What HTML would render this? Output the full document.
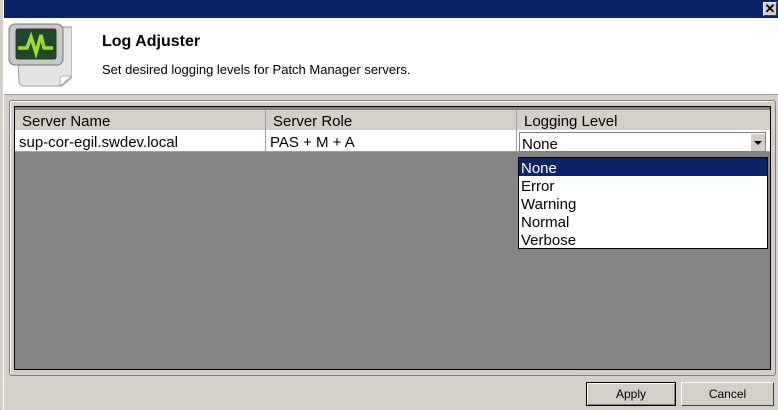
<!DOCTYPE html><html><head><style>
*{margin:0;padding:0;box-sizing:border-box}
body{width:778px;height:410px;position:relative;background:#d4d0c8;font-family:"Liberation Sans",sans-serif;overflow:hidden}
.a{position:absolute}
</style></head><body>
<div class="a" style="left:0;top:0;width:3px;height:410px;background:#d4d0c8"></div>
<div class="a" style="left:3px;top:0;width:1px;height:410px;background:#fff"></div>
<div class="a" style="left:4px;top:0;width:774px;height:18px;background:#0a246a"></div>
<div class="a" style="left:763px;top:2px;width:14px;height:14px;background:#d4d0c8;border:1px solid;border-color:#fff #404040 #404040 #fff;font:bold 13px/11px 'Liberation Sans';text-align:center">✕</div>
<div class="a" style="left:4px;top:18px;width:774px;height:77px;background:#fff;border-bottom:1px solid #a0a0a0"></div>
<svg class="a" style="left:6px;top:21px" width="66" height="66" viewBox="0 0 66 66">
<path d="M10 6h56v50l-10 9H18a5 5 0 0 1-5-5z" fill="#e4e4e4" stroke="#999"/>
<path d="M54 65l12-10h-9a3 3 0 0 0-3 3z" fill="#fff" stroke="#aaa"/>
<rect x="3" y="3" width="54" height="41" rx="6" fill="#c8c8c8" stroke="#777"/>
<rect x="10" y="8" width="40" height="30" rx="2" fill="#1f4a2a" stroke="#333"/>
<path d="M12 27h9l4-11 5 16 5-18 3 13h9" fill="none" stroke="#9be020" stroke-width="3.5"/>
</svg>
<div class="a" style="left:102px;top:33px;font-size:16px;font-weight:bold;color:#000">Log Adjuster</div>
<div class="a" style="left:102px;top:62px;font-size:13px;color:#000">Set desired logging levels for Patch Manager servers.</div>
<div class="a" style="left:9px;top:100px;width:767px;height:276px;border:1px solid #808080;border-radius:3px;box-shadow:1px 1px 0 #fff inset"></div>
<div class="a" style="left:14px;top:106px;width:757px;height:264px;background:#858383;border:1px solid #000"></div>
<div class="a" style="left:15px;top:110px;width:755px;height:20px;background:#d4d0c8"></div>
<div class="a" style="left:15px;top:130px;width:755px;height:22px;background:#fff;border-bottom:1px solid #a0a0a0"></div>
<div class="a" style="left:265px;top:110px;width:1px;height:42px;background:#a0a0a0"></div>
<div class="a" style="left:516px;top:110px;width:1px;height:42px;background:#a0a0a0"></div>
<div class="a" style="left:22px;top:113px;font-size:15px">Server Name</div>
<div class="a" style="left:273px;top:113px;font-size:15px">Server Role</div>
<div class="a" style="left:524px;top:113px;font-size:15px">Logging Level</div>
<div class="a" style="left:19px;top:134px;font-size:15px">sup-cor-egil.swdev.local</div>
<div class="a" style="left:270px;top:134px;font-size:15px">PAS + M + A</div>
<div class="a" style="left:519px;top:132px;width:247px;height:20px;border:1px solid #808080;background:#fff"></div>
<div class="a" style="left:522px;top:136px;font-size:15px">None</div>
<div class="a" style="left:750px;top:134px;width:15px;height:17px;background:#d4d0c8;border-left:1px solid #fff"></div>
<div class="a" style="left:754px;top:141px;width:0;height:0;border-left:4px solid transparent;border-right:4px solid transparent;border-top:4px solid #000"></div>
<div class="a" style="left:518px;top:157px;width:250px;height:92px;background:#fff;border:1px solid #000"></div>
<div class="a" style="left:519px;top:158px;width:248px;height:18px;background:#0a246a"></div>
<div class="a" style="left:521px;top:160px;font-size:15px;line-height:18px;color:#000">
<div style="color:#fff">None</div><div>Error</div><div>Warning</div><div>Normal</div><div>Verbose</div></div>
<div class="a" style="left:586px;top:382px;width:90px;height:24px;border:1px solid #000;background:#d4d0c8;box-shadow:inset 1px 1px #fff,inset -1px -1px #808080;font-size:12px;text-align:center;line-height:22px">Apply</div>
<div class="a" style="left:681px;top:382px;width:93px;height:24px;border:1px solid;border-color:#fff #404040 #404040 #fff;background:#d4d0c8;font-size:12px;text-align:center;line-height:22px">Cancel</div>
</body></html>
